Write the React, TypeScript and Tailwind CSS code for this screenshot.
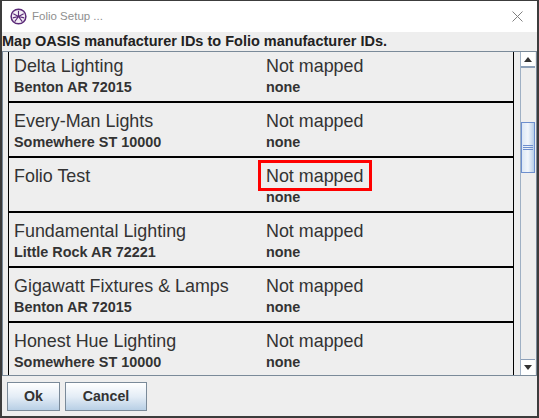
const rows = [
  { name: 'Every-Man Lights', place: 'Somewhere ST 10000' },
  { name: 'Folio Test', place: '', boxed: true },
  { name: 'Fundamental Lighting', place: 'Little Rock AR 72221' },
  { name: 'Gigawatt Fixtures & Lamps', place: 'Benton AR 72015' },
];

function RowText({ name, place, boxed, top }: { name: string; place: string; boxed?: boolean; top: string }) {
  return (
    <>
      <div className={`flex items-end ${top}`}>
        <span className="w-[252px] text-[17.9px] leading-[24px] text-[#333]">{name}</span>
        <span className="relative text-[17.9px] leading-[24px] text-[#333]">
          Not mapped
          {boxed && <span className="absolute -bottom-[3px] -left-[8px] -right-[9px] -top-[4px] border-[3px] border-[#f00]" />}
        </span>
      </div>
      <div className="mt-[2px] flex h-[16px] items-center text-[14.4px] font-bold text-[#333]">
        <span className="w-[252px]">{place}</span>
        <span>none</span>
      </div>
    </>
  );
}

function Arrow({ down }: { down?: boolean }) {
  return (
    <svg width="8" height="5" viewBox="0 0 8 5" className={down ? 'rotate-180' : ''}>
      <path d="M4 0 L8 5 H0 Z" fill="#333" />
    </svg>
  );
}

export default function App() {
  return (
    <div className="flex h-[418px] w-[539px] flex-col overflow-hidden border-x-2 border-b-2 border-t border-[#3c3c3c] bg-[#eeeeee] font-['Liberation_Sans',Arial,sans-serif]">
      <div className="flex h-[31px] shrink-0 items-center bg-white pl-[8px] pr-[14px]">
        <svg width="17" height="17" viewBox="0 0 18 18" className="shrink-0">
          <circle cx="9" cy="9" r="7.8" fill="#f4eef6" stroke="#5b2a78" strokeWidth="1.6" />
          <path d="M9 9 L9 3 M9 9 L3.5 6 M9 9 L14.5 6 M9 9 L5 14.5 M9 9 L13 14.5 M9 9 L3 10.5 M9 9 L15 10.5" stroke="#5b2a78" strokeWidth="1.2" />
        </svg>
        <span className="ml-[5px] text-[11.5px] text-[#8f8f8f]">Folio Setup ...</span>
        <svg width="11" height="11" viewBox="0 0 11 11" className="ml-auto">
          <path d="M0.5 0.5 L10.5 10.5 M10.5 0.5 L0.5 10.5" stroke="#808080" strokeWidth="1" />
        </svg>
      </div>

      <div className="flex h-[19px] shrink-0 items-center whitespace-nowrap text-[14.5px] font-bold text-[#222]">
        Map OASIS manufacturer IDs to Folio manufacturer IDs.
      </div>

      <div className="flex h-[325px] shrink-0 border-x border-y border-[#7a8a99]">
        <div className="ml-[5px] flex w-[506px] flex-col overflow-hidden border-x border-black">
          <div className="flex h-[51px] shrink-0 flex-col border-b-2 border-black pl-[5px]">
            <RowText name="Delta Lighting" place="Benton AR 72015" top="h-[26px]" />
          </div>
          {rows.map((r) => (
            <div key={r.name} className="flex h-[55px] shrink-0 flex-col border-b-2 border-black pl-[5px]">
              <RowText {...r} top="h-[30px]" />
            </div>
          ))}
          <div className="flex shrink-0 flex-col pl-[5px]">
            <RowText name="Honest Hue Lighting" place="Somewhere ST 10000" top="h-[30px]" />
          </div>
        </div>

        <div className="ml-[6px] flex w-[15px] flex-col border-l border-[#9fb0c4]">
          <div className="flex h-[16px] shrink-0 items-center justify-center border-b-2 border-[#8da0b8] bg-white">
            <Arrow />
          </div>
          <div className="h-[54px] shrink-0" />
          <div className="flex h-[51px] shrink-0 items-center justify-center border border-[#6d8fce] bg-gradient-to-r from-[#dbe7f5] via-[#f2f6fb] to-[#b5cde8]">
            <div className="flex h-[5px] w-[10px] flex-col justify-between">
              <div className="h-px bg-[#6d8fce]" />
              <div className="h-px bg-[#6d8fce]" />
              <div className="h-px bg-[#6d8fce]" />
            </div>
          </div>
          <div className="flex-1" />
          <div className="flex h-[16px] shrink-0 items-center justify-center border-t border-[#8da0b8] bg-white">
            <Arrow down />
          </div>
        </div>
      </div>

      <div className="flex flex-1 items-start gap-[5px] pl-[5px] pt-[6px]">
        <button className="h-[29px] w-[53px] border border-[#7a8a99] bg-gradient-to-b from-white via-[#e4edf6] to-[#b8cfe5] text-[14.2px] font-bold text-[#333]">Ok</button>
        <button className="h-[29px] w-[82px] border border-[#7a8a99] bg-gradient-to-b from-white via-[#e4edf6] to-[#b8cfe5] text-[14.2px] font-bold text-[#333]">Cancel</button>
      </div>
    </div>
  );
}
